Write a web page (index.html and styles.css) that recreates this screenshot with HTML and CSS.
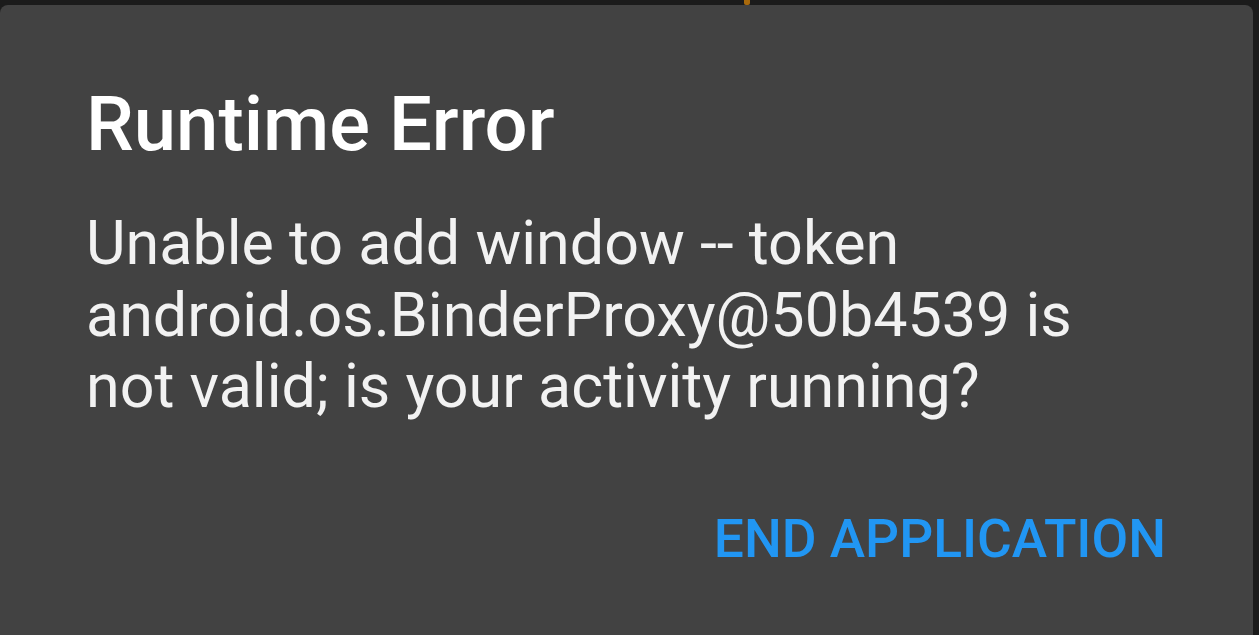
FILE: index.html
```html
<!DOCTYPE html>
<html lang="en">
<head>
<meta charset="utf-8">
<title>Runtime Error</title>
<link rel="stylesheet" href="styles.css">
</head>
<body>
<div class="screen">
  <div class="topstrip"><span class="peek"></span></div>
  <div class="dialog">
    <h1 class="title">Runtime Error</h1>
    <p class="message">Unable to add window -- token android.os.BinderProxy@50b4539 is not valid; is your activity running?</p>
    <div class="actions">
      <span class="btn">END APPLICATION</span>
    </div>
  </div>
</div>
</body>
</html>
```
FILE: styles.css
```css
html, body {
  margin: 0;
  padding: 0;
  background: #1b1b1b;
  overflow: hidden;
}
.screen {
  width: 1259px;
  height: 635px;
  display: flex;
  flex-direction: column;
  font-family: Roboto, "Noto Sans", "Liberation Sans", sans-serif;
}
.topstrip {
  height: 5px;
  display: flex;
  flex-shrink: 0;
}
.peek {
  margin-left: 744px;
  width: 6px;
  height: 5px;
  background: #a8690c;
  border-radius: 0 0 2px 2px;
}
.dialog {
  width: 1253px;
  flex: 1;
  background: #424242;
  border-radius: 8px 8px 0 0;
  padding: 74px 87px 0 86px;
  box-sizing: border-box;
  display: flex;
  flex-direction: column;
}
.title {
  margin: 0;
  font-size: 76px;
  line-height: 90px;
  font-weight: 500;
  color: #ffffff;
}
.message {
  margin: 39px 0 0 0;
  font-size: 61px;
  line-height: 71.5px;
  font-weight: 400;
  color: #f2f2f2;
}
.actions {
  margin-top: 86px;
  display: flex;
  justify-content: flex-end;
}
.btn {
  font-size: 53.3px;
  line-height: 60px;
  font-weight: 500;
  color: #2196f3;
}
```
